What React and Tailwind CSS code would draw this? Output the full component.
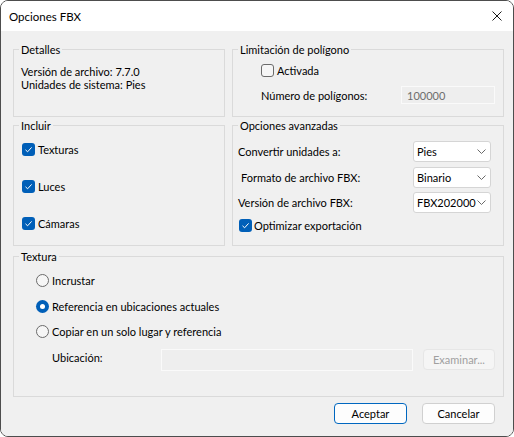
import { useState } from "react";

const font = { fontFamily: "Lato, 'Liberation Sans', sans-serif" };

function Check({ checked }) {
  if (checked) {
    return (
      <span className="w-[13px] h-[13px] rounded-[3px] bg-[#005fb8] flex items-center justify-center shrink-0">
        <svg width="9" height="9" viewBox="0 0 9 9">
          <path d="M1.5 4.8 L3.6 6.8 L7.6 2.4" fill="none" stroke="#fff" strokeWidth="1" />
        </svg>
      </span>
    );
  }
  return <span className="w-[13px] h-[13px] rounded-[3px] border border-[#6b6b6b] bg-[#f6f6f6] shrink-0" />;
}

function Radio({ checked }) {
  if (checked) {
    return (
      <span className="w-[13px] h-[13px] rounded-full bg-[#005fb8] flex items-center justify-center shrink-0">
        <span className="w-[5px] h-[5px] rounded-full bg-white" />
      </span>
    );
  }
  return <span className="w-[13px] h-[13px] rounded-full border border-[#6b6b6b] bg-[#f6f6f6] shrink-0" />;
}

function Select({ value }) {
  return (
    <div className="w-[78px] h-[21px] bg-white border border-[#d5d5d5] rounded-[3px] flex items-center justify-between pl-[3px] pr-[4px]">
      <span>{value}</span>
      <svg width="9" height="5" viewBox="0 0 9 5">
        <path d="M0.5 0.5 L4.5 4.5 L8.5 0.5" fill="none" stroke="#6a6a6a" strokeWidth="1" />
      </svg>
    </div>
  );
}

function Group({ title, className, children }) {
  return (
    <fieldset className={"border border-[#dadada] min-w-0 " + className}>
      <legend className="ml-[5px] px-[2px] leading-[15px]">{title}</legend>
      {children}
    </fieldset>
  );
}

export default function App() {
  const [textura] = useState("ref");

  return (
    <div className="w-[514px] h-[437px] bg-white text-[11px] leading-[15px] text-black" style={font}>
      <div className="w-full h-full rounded-[8px] border border-[#4d4d4d] overflow-hidden flex flex-col">
        {/* title bar */}
        <div className="h-[30px] bg-white flex items-center justify-between pl-[8px] pr-[11px] shrink-0">
          <span className="text-[11.5px]">Opciones FBX</span>
          <svg width="10" height="10" viewBox="0 0 10 10">
            <path d="M0.5 0.5 L9.5 9.5 M9.5 0.5 L0.5 9.5" stroke="#1a1a1a" strokeWidth="1" />
          </svg>
        </div>

        <div className="flex-1 bg-[#f0f0f0] pl-[12px] pr-[9px] pt-[11px] flex flex-col">
          <div className="flex gap-[7px]">
            <Group title="Detalles" className="w-[212px] h-[75px]">
              <div className="pl-[7px] pt-[8px] leading-[13px]">
                <div>Versión de archivo: 7.7.0</div>
                <div>Unidades de sistema: Pies</div>
              </div>
            </Group>
            <Group title="Limitación de polígono" className="w-[272px] h-[75px]">
              <div className="pl-[28px] pr-[8px] pt-[6px]">
                <div className="flex items-center gap-[3px] h-[15px]">
                  <Check checked={false} />
                  <span>Activada</span>
                </div>
                <div className="flex items-center justify-between mt-[8px]">
                  <span>Número de polígonos:</span>
                  <div className="w-[94px] h-[18px] border border-[#fafafa] bg-[#eeeeee] flex items-center pl-[5px] text-[#6d6d6d]">
                    100000
                  </div>
                </div>
              </div>
            </Group>
          </div>

          <div className="flex gap-[7px] mt-[1px]">
            <Group title="Incluir" className="w-[212px] h-[128px]">
              <div className="pl-[8px] pt-[9px] flex flex-col gap-[22px]">
                <div className="flex items-center gap-[3px] h-[15px]">
                  <Check checked />
                  <span>Texturas</span>
                </div>
                <div className="flex items-center gap-[3px] h-[15px]">
                  <Check checked />
                  <span>Luces</span>
                </div>
                <div className="flex items-center gap-[3px] h-[15px]">
                  <Check checked />
                  <span>Cámaras</span>
                </div>
              </div>
            </Group>
            <Group title="Opciones avanzadas" className="w-[272px] h-[128px]">
              <div className="pl-[5px] pr-[12px] pt-[8px] flex flex-col">
                <div className="flex items-center justify-between h-[21px]">
                  <span>Convertir unidades a:</span>
                  <Select value="Pies" />
                </div>
                <div className="flex items-center justify-between h-[21px] mt-[5px]">
                  <span className="pl-[3px]">Formato de archivo FBX:</span>
                  <Select value="Binario" />
                </div>
                <div className="flex items-center justify-between h-[21px] mt-[4px]">
                  <span>Versión de archivo FBX:</span>
                  <Select value="FBX202000" />
                </div>
                <div className="flex items-center gap-[2px] h-[15px] mt-[5px] pl-[1px]">
                  <Check checked />
                  <span>Optimizar exportación</span>
                </div>
              </div>
            </Group>
          </div>

          <Group title="Textura" className="w-[491px] h-[148px] mt-[3px]">
            <div className="pl-[22px] pt-[9px] flex flex-col">
              <div className="flex items-center gap-[3px] h-[15px]">
                <Radio checked={textura === "inc"} />
                <span>Incrustar</span>
              </div>
              <div className="flex items-center gap-[3px] h-[15px] mt-[11px]">
                <Radio checked={textura === "ref"} />
                <span>Referencia en ubicaciones actuales</span>
              </div>
              <div className="flex items-center gap-[3px] h-[15px] mt-[10px]">
                <Radio checked={textura === "copy"} />
                <span>Copiar en un solo lugar y referencia</span>
              </div>
              <div className="flex items-start mt-[10px] pl-[16px]">
                <span className="w-[109px] pt-[1px]">Ubicación:</span>
                <div className="w-[252px] h-[22px] border border-[#fafafa] bg-[#eeeeee]" />
                <div className="ml-[10px] w-[72px] h-[21px] rounded-[4px] border border-[#e6e6e6] bg-[#f5f5f5] flex items-center justify-center text-[#a0a0a0]">
                  Examinar...
                </div>
              </div>
            </div>
          </Group>

          <div className="flex justify-end gap-[15px] pr-[9px] mt-[6px]">
            <button className="w-[73px] h-[21px] rounded-[4px] border border-[#0067c0] bg-[#fdfdfd]">Aceptar</button>
            <button className="w-[73px] h-[21px] rounded-[4px] border border-[#d0d0d0] bg-[#fdfdfd]">Cancelar</button>
          </div>
        </div>
      </div>
    </div>
  );
}
